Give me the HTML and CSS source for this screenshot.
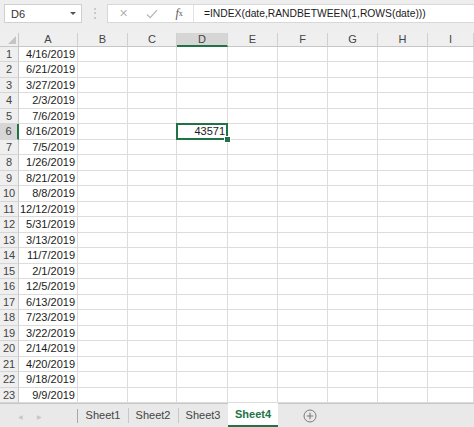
FILE: index.html
```html
<!DOCTYPE html>
<html lang="en">
<head>
  <meta charset="UTF-8">
  <meta name="viewport" content="width=device-width, initial-scale=1.0">
  <title>Random date - Sheet4</title>
  <link rel="stylesheet" href="styles.css">
</head>
<body>

<div class="app">
  <!-- Name box + formula bar -->
  <div class="formula-row">
    <div class="name-box">
      <span>D6</span>
      <span class="caret"></span>
    </div>
    <div class="grip">&#8942;</div>
    <div class="formula-box">
      <div class="fx-buttons">
        <span class="fx-btn cancel">&#x2715;</span>
        <span class="fx-btn enter">
          <svg width="12" height="10" viewBox="0 0 12 10"><path d="M1 5.5 L4.2 8.6 L11 1.2" fill="none" stroke="#b5b5b5" stroke-width="1.2"/></svg>
        </span>
        <span class="fx-btn fx"><i>f</i><sub>x</sub></span>
      </div>
      <div class="formula-text">=INDEX(date,RANDBETWEEN(1,ROWS(date)))</div>
    </div>
  </div>

  <!-- Cell grid, filled in by the script below -->
  <div class="sheet" id="sheet"></div>

  <!-- Sheet tabs -->
  <div class="tab-bar">
    <div class="tab-nav">
      <span class="nav-arrow">&#9664;</span>
      <span class="nav-arrow">&#9654;</span>
    </div>
    <div class="tabs">
      <div class="tab">Sheet1</div>
      <div class="tab">Sheet2</div>
      <div class="tab">Sheet3</div>
      <div class="tab active">Sheet4</div>
    </div>
    <div class="add-sheet">
      <svg width="14" height="14" viewBox="0 0 14 14"><circle cx="7" cy="7" r="6" fill="none" stroke="#7a7a7a" stroke-width="1"/><path d="M7 3.8 V10.2 M3.8 7 H10.2" stroke="#7a7a7a" stroke-width="1.1"/></svg>
    </div>
  </div>
</div>

<script>
const dates = [
  "4/16/2019", "6/21/2019", "3/27/2019", "2/3/2019", "7/6/2019", "8/16/2019",
  "7/5/2019", "1/26/2019", "8/21/2019", "8/8/2019", "12/12/2019", "5/31/2019",
  "3/13/2019", "11/7/2019", "2/1/2019", "12/5/2019", "6/13/2019", "7/23/2019",
  "3/22/2019", "2/14/2019", "4/20/2019", "9/18/2019", "9/9/2019"
];
const cols = ["A", "B", "C", "D", "E", "F", "G", "H", "I"];
const activeRow = 6;
const activeCol = "D";

const sheet = document.getElementById("sheet");

function cell(cls, text) {
  const div = document.createElement("div");
  div.className = cls;
  if (text) div.textContent = text;
  sheet.appendChild(div);
  return div;
}

// header row
cell("corner");
cols.forEach(c => cell("col-head" + (c === activeCol ? " selected" : ""), c));

// data rows
dates.forEach((d, i) => {
  const row = i + 1;
  cell("row-head" + (row === activeRow ? " selected" : ""), String(row));
  cols.forEach(c => {
    let text = "";
    if (c === "A") text = d;
    if (c === activeCol && row === activeRow) text = "43571";
    const isActive = c === activeCol && row === activeRow;
    cell("cell num" + (isActive ? " active" : ""), text);
  });
});
</script>

</body>
</html>
```

FILE: styles.css
```css
body {
  margin: 0;
  padding: 0;
  font-family: 'Liberation Sans', Arial, sans-serif;
  color: #1a1a1a;
  background-color: #fff;
  overflow: hidden;
}

.app {
  width: 474px;
  height: 427px;
  display: flex;
  flex-direction: column;
  background-color: #eeeeee;
}

/* Formula bar */
.formula-row {
  height: 33px;
  display: flex;
  align-items: flex-start;
  padding: 4px 0 0 4px;
  box-sizing: border-box;
}

.name-box {
  width: 78px;
  height: 19px;
  box-sizing: border-box;
  background-color: #fff;
  border: 1px solid #d0d0d0;
  display: flex;
  align-items: center;
  justify-content: space-between;
  padding: 0 5px 0 6px;
  font-size: 11px;
  color: #333;
}

.caret {
  width: 0;
  height: 0;
  border-left: 3px solid transparent;
  border-right: 3px solid transparent;
  border-top: 3px solid #555;
}

.grip {
  width: 25px;
  text-align: center;
  color: #b8b8b8;
  font-size: 12px;
  line-height: 19px;
}

.formula-box {
  flex: 1;
  height: 19px;
  display: flex;
  background-color: #fff;
  border: 1px solid #d8d8d8;
  border-right: none;
  box-sizing: border-box;
}

.fx-buttons {
  width: 85px;
  display: flex;
  align-items: center;
  border-right: 1px solid #e2e2e2;
}

.fx-btn {
  width: 28px;
  text-align: center;
  color: #b5b5b5;
  font-size: 11px;
  display: flex;
  justify-content: center;
  align-items: center;
}

.fx-btn.cancel {
  padding-left: 2px;
}

.fx-btn.fx {
  color: #555;
  font-family: 'Liberation Serif', serif;
  font-size: 12px;
}

.fx-btn.fx sub {
  font-size: 8px;
  vertical-align: -1px;
}

.formula-text {
  padding-left: 10px;
  font-size: 10.3px;
  line-height: 17px;
  color: #1a1a1a;
  white-space: nowrap;
}

/* Grid */
.sheet {
  display: grid;
  grid-template-columns: 19px 59px 50px 49px 51px 50px 50px 50px 50px 1fr;
  grid-template-rows: 14px repeat(23, 15.5px);
  background-color: #fff;
  font-size: 11px;
}

.corner {
  position: relative;
  background-color: #efefef;
  border-right: 1px solid #c6c6c6;
  border-bottom: 1px solid #c6c6c6;
}

.corner::after {
  content: '';
  position: absolute;
  right: 2px;
  bottom: 2px;
  border-left: 8px solid transparent;
  border-bottom: 8px solid #c4c4c4;
}

.col-head {
  background-color: #efefef;
  border-right: 1px solid #d0d0d0;
  border-bottom: 1px solid #c6c6c6;
  text-align: center;
  line-height: 13px;
  color: #444;
}

.col-head.selected {
  background-color: #d6d6d6;
  border-bottom: 2px solid #217346;
}

.row-head {
  background-color: #efefef;
  border-right: 1px solid #c6c6c6;
  border-bottom: 1px solid #d6d6d6;
  text-align: center;
  color: #444;
  line-height: 15px;
  overflow: hidden;
}

.row-head.selected {
  background-color: #d6d6d6;
  border-right: 2px solid #217346;
}

.cell {
  border-right: 1px solid #dcdcdc;
  border-bottom: 1px solid #dcdcdc;
  line-height: 15px;
  padding-right: 2px;
  overflow: hidden;
  white-space: nowrap;
}

.num {
  text-align: right;
}

.cell.active {
  position: relative;
  overflow: visible;
}

.cell.active::before {
  content: '';
  position: absolute;
  left: -1px;
  top: -1px;
  right: -1px;
  bottom: -1px;
  border: 2px solid #217346;
}

.cell.active::after {
  content: '';
  position: absolute;
  right: -4px;
  bottom: -4px;
  width: 5px;
  height: 5px;
  background-color: #217346;
  border: 1px solid #fff;
}

/* Sheet tabs */
.tab-bar {
  flex: 1;
  display: flex;
  align-items: stretch;
  border-top: 1px solid #c6c6c6;
  background-color: #e9e9e9;
  font-size: 11px;
}

.tab-nav {
  width: 78px;
  display: flex;
  align-items: center;
  padding-left: 18px;
  gap: 14px;
  box-sizing: border-box;
  border-right: 1px solid #a8a8a8;
  margin: 5px 0 4px 0;
  color: #c6c6c6;
  font-size: 6px;
}

.tabs {
  display: flex;
}

.tab {
  width: 50px;
  text-align: center;
  line-height: 22px;
  color: #444;
  position: relative;
}

.tab + .tab::before {
  content: '';
  position: absolute;
  left: 0;
  top: 4px;
  bottom: 4px;
  border-left: 1px solid #c8c8c8;
}

.tab.active {
  background-color: #fff;
  color: #217346;
  font-weight: bold;
  margin-top: -1px;
  border-bottom: 2px solid #217346;
  line-height: 22px;
}

.tab.active::before {
  display: none;
}

.add-sheet {
  margin-left: 25px;
  display: flex;
  align-items: center;
}
```
